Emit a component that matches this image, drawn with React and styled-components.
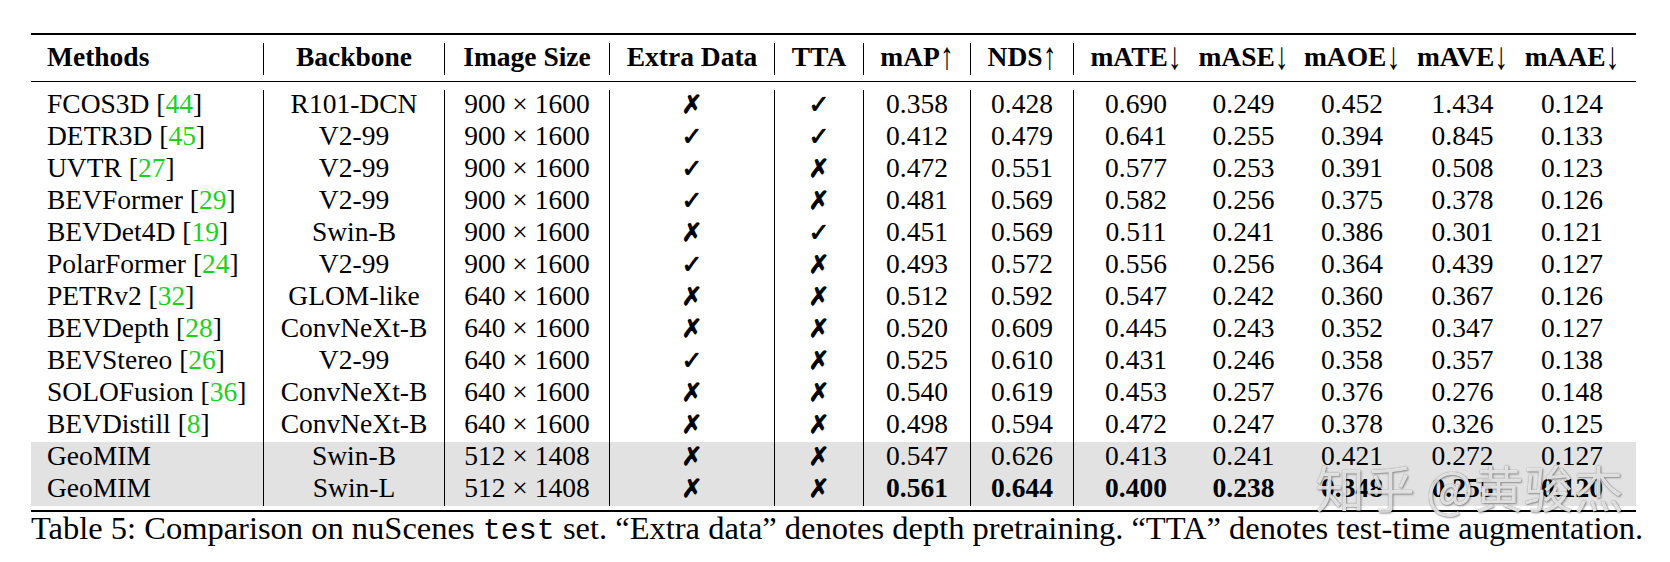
import React from 'react';
import styled, { createGlobalStyle } from 'styled-components';

const GlobalStyle = createGlobalStyle`
  html, body { margin: 0; padding: 0; background: #fff; }
  body {
    font-family: "Liberation Serif", "Times New Roman", serif;
    color: #000;
  }
`;

const COLS = '233px 181px 165px 165px 89px 107px 103px 116px 107px 110px 111px 118px';

const SPECS = [
  { align: 'left', pl: 16, bar: true },
  { bar: true },
  { bar: true },
  { bar: true },
  { bar: true },
  { bar: true },
  { bar: true },
  { pl: 8 },
  {},
  {},
  {},
  { pr: 10 },
];

const Page = styled.div`
  padding: 33px 0 0 31px;
`;

const Table = styled.div`
  position: relative;
  width: 1605px;
  display: flex;
  flex-direction: column;
`;

const Rule = styled.div`
  height: ${(p) => p.$h}px;
  background: #000;
  margin-top: ${(p) => p.$mt || 0}px;
`;

const Head = styled.div`
  display: grid;
  grid-template-columns: ${COLS};
  height: 32px;
  margin-top: 8px;
`;

const Body = styled.div`
  display: flex;
  flex-direction: column;
  margin-top: 8px;
`;

const Row = styled.div`
  display: grid;
  grid-template-columns: ${COLS};
  height: 32px;
  background: ${(p) => (p.$shaded ? '#e2e2e2' : 'transparent')};
`;

const Cell = styled.div`
  font-size: 27.5px;
  line-height: 27px;
  white-space: nowrap;
  text-align: ${(p) => p.$align || 'center'};
  padding-left: ${(p) => p.$pl || 0}px;
  padding-right: ${(p) => p.$pr || 0}px;
  border-right: ${(p) => (p.$bar ? '1px solid #000' : 'none')};
  font-weight: ${(p) => (p.$bold ? 700 : 400)};
`;

const Arrow = styled.span`
  display: inline-block;
  font-weight: 400;
  transform: scaleY(1.4);
  transform-origin: 50% 60%;
`;

const Cite = styled.span`
  color: #1ed01e;
`;

const Mark = styled.span`
  display: inline-block;
  font-family: "DejaVu Sans", sans-serif;
  font-size: 25px;
  font-weight: 400;
  -webkit-text-stroke: 0.9px #000;
`;

const Caption = styled.div`
  padding-right: 14px;
  font-size: 32.5px;
  line-height: 32px;
  text-align: center;
  white-space: nowrap;
`;

const Mono = styled.span`
  font-family: "Liberation Mono", "Courier New", monospace;
  font-size: 30px;
`;

const Watermark = styled.div`
  position: absolute;
  left: 1284px;
  top: 428px;
  font-family: "Noto Sans CJK SC", sans-serif;
  font-size: 50px;
  line-height: 50px;
  white-space: nowrap;
  color: rgba(255, 255, 255, 0.82);
  text-shadow: 0 0 1px rgba(0, 0, 0, 0.55), 1px 1px 2px rgba(0, 0, 0, 0.35);
`;

const headers = [
  'Methods',
  'Backbone',
  'Image Size',
  'Extra Data',
  'TTA',
  ['mAP', '↑'],
  ['NDS', '↑'],
  ['mATE', '↓'],
  ['mASE', '↓'],
  ['mAOE', '↓'],
  ['mAVE', '↓'],
  ['mAAE', '↓'],
];

const Y = '✓';
const N = '✗';

const rows = [
  ['FCOS3D', '44', 'R101-DCN', '900 × 1600', N, Y, '0.358', '0.428', '0.690', '0.249', '0.452', '1.434', '0.124'],
  ['DETR3D', '45', 'V2-99', '900 × 1600', Y, Y, '0.412', '0.479', '0.641', '0.255', '0.394', '0.845', '0.133'],
  ['UVTR', '27', 'V2-99', '900 × 1600', Y, N, '0.472', '0.551', '0.577', '0.253', '0.391', '0.508', '0.123'],
  ['BEVFormer', '29', 'V2-99', '900 × 1600', Y, N, '0.481', '0.569', '0.582', '0.256', '0.375', '0.378', '0.126'],
  ['BEVDet4D', '19', 'Swin-B', '900 × 1600', N, Y, '0.451', '0.569', '0.511', '0.241', '0.386', '0.301', '0.121'],
  ['PolarFormer', '24', 'V2-99', '900 × 1600', Y, N, '0.493', '0.572', '0.556', '0.256', '0.364', '0.439', '0.127'],
  ['PETRv2', '32', 'GLOM-like', '640 × 1600', N, N, '0.512', '0.592', '0.547', '0.242', '0.360', '0.367', '0.126'],
  ['BEVDepth', '28', 'ConvNeXt-B', '640 × 1600', N, N, '0.520', '0.609', '0.445', '0.243', '0.352', '0.347', '0.127'],
  ['BEVStereo', '26', 'V2-99', '640 × 1600', Y, N, '0.525', '0.610', '0.431', '0.246', '0.358', '0.357', '0.138'],
  ['SOLOFusion', '36', 'ConvNeXt-B', '640 × 1600', N, N, '0.540', '0.619', '0.453', '0.257', '0.376', '0.276', '0.148'],
  ['BEVDistill', '8', 'ConvNeXt-B', '640 × 1600', N, N, '0.498', '0.594', '0.472', '0.247', '0.378', '0.326', '0.125'],
];

const ours = [
  ['GeoMIM', 'Swin-B', '512 × 1408', N, N, '0.547', '0.626', '0.413', '0.241', '0.421', '0.272', '0.127', false],
  ['GeoMIM', 'Swin-L', '512 × 1408', N, N, '0.561', '0.644', '0.400', '0.238', '0.348', '0.255', '0.120', true],
];

function cellProps(i) {
  const s = SPECS[i];
  return { $align: s.align, $pl: s.pl, $pr: s.pr, $bar: s.bar };
}

function renderValue(v) {
  if (v === Y || v === N) return <Mark>{v}</Mark>;
  return v;
}

export default function App() {
  return (
    <>
      <GlobalStyle />
      <Page>
        <Table>
          <Rule $h={2} />
          <Head>
            {headers.map((h, i) => (
              <Cell key={i} {...cellProps(i)} $bold>
                {Array.isArray(h) ? (
                  <>
                    {h[0]}
                    <Arrow>{h[1]}</Arrow>
                  </>
                ) : (
                  h
                )}
              </Cell>
            ))}
          </Head>
          <Rule $h={1} $mt={6} />
          <Body>
            {rows.map((r, ri) => (
              <Row key={ri}>
                <Cell {...cellProps(0)}>
                  {r[0]} [<Cite>{r[1]}</Cite>]
                </Cell>
                {r.slice(2).map((v, ci) => (
                  <Cell key={ci} {...cellProps(ci + 1)}>
                    {renderValue(v)}
                  </Cell>
                ))}
              </Row>
            ))}
            {ours.map((r, ri) => {
              const best = r[12];
              return (
                <Row key={'o' + ri} $shaded>
                  {r.slice(0, 12).map((v, ci) => (
                    <Cell key={ci} {...cellProps(ci)} $bold={best && ci >= 5}>
                      {renderValue(v)}
                    </Cell>
                  ))}
                </Row>
              );
            })}
          </Body>
          <Rule $h={2} $mt={4} />
          <Caption>
            Table 5: Comparison on nuScenes <Mono>test</Mono> set. “Extra data” denotes depth
            pretraining. “TTA” denotes test-time augmentation.
          </Caption>
          <Watermark>知乎 @黄骏杰</Watermark>
        </Table>
      </Page>
    </>
  );
}
